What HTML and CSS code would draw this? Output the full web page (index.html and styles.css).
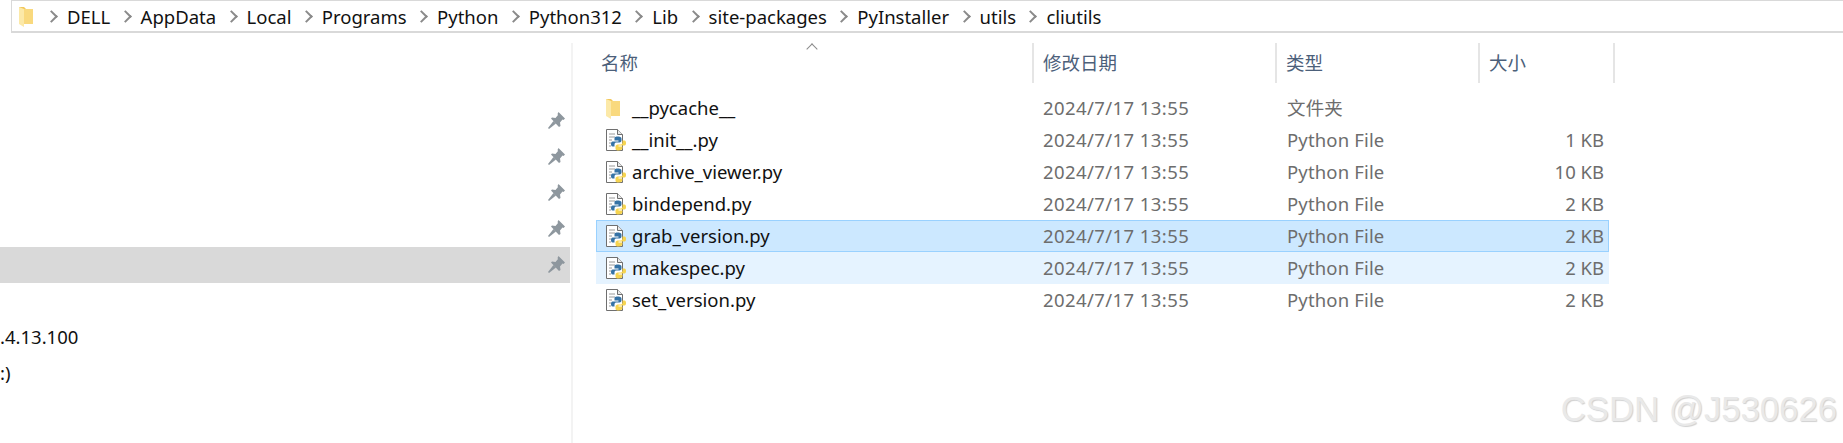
FILE: index.html
```html
<!DOCTYPE html>
<html lang="zh-CN">

<head>
    <meta charset="UTF-8">
    <title>cliutils</title>
    <link rel="stylesheet" href="styles.css">
</head>

<body>
    <svg class="defs" width="0" height="0">
        <symbol id="folder" viewBox="0 0 14 21">
            <path d="M0 1h5l2 2h7v15H0z" fill="#f2c75c" />
            <path d="M4 3h10v15H4z" fill="#f9d97e" />
            <path d="M0 1l5 2v18l-5-3z" fill="#fce9a8" />
        </symbol>
        <symbol id="pyfile" viewBox="0 0 20 22">
            <path d="M.5.5h11l5 5v16H.5z" fill="#fff" stroke="#6f6f6f" />
            <path d="M11.5.5v5h5" fill="#e8e8e8" stroke="#6f6f6f" />
            <path d="M3 5h6M3 8h6M3 11h3M3 14h2M3 17h2" stroke="#9a9a9a" />
            <g transform="translate(1.500 .500)">
                <path d="M10 7c-3 0-3 1-3 3v1h4v1H5c-2 0-2 5 0 5h2v-2c0-1.500 1-2 2-2h3c1 0 2-1 2-2v-2c0-1.500-2-2-4-2z" fill="#3572a5" />
                <path d="M11 21c3 0 4-1 4-3v-1h-4v-1h6c2 0 2-5 0-5h-2v2c0 1.500-1 2-2 2h-3c-1 0-2 1-2 2v2c0 1.500 1 2 3 2z" fill="#f6d44f" />
            </g>
        </symbol>
        <symbol id="pin" viewBox="0 0 17 17">
            <path d="M10.500 0L17 6.500 15.500 8l-1-.5L12 10.500 12.500 14 11 15 3 6.500 4 5.500l3.500.5L10 3l-.5-1z" fill="#8e979e" />
            <path d="M5.500 9L8 11.500 1 17 0 16z" fill="#8e979e" />
        </symbol>
    </svg>

    <div class="addr">
        <svg class="addr-folder"><use href="#folder" /></svg>
        <span class="crumb">DELL</span>
        <span class="crumb">AppData</span>
        <span class="crumb">Local</span>
        <span class="crumb">Programs</span>
        <span class="crumb">Python</span>
        <span class="crumb">Python312</span>
        <span class="crumb">Lib</span>
        <span class="crumb">site-packages</span>
        <span class="crumb">PyInstaller</span>
        <span class="crumb">utils</span>
        <span class="crumb">cliutils</span>
    </div>

    <div class="wrap">
        <!--左边导航-->
        <div class="side">
            <div class="nav"><svg class="pin"><use href="#pin" /></svg></div>
            <div class="nav"><svg class="pin"><use href="#pin" /></svg></div>
            <div class="nav"><svg class="pin"><use href="#pin" /></svg></div>
            <div class="nav"><svg class="pin"><use href="#pin" /></svg></div>
            <div class="nav current"><svg class="pin"><use href="#pin" /></svg></div>
            <div class="nav"></div>
            <div class="nav">.4.13.100</div>
            <div class="nav">:)</div>
        </div>
        <!--文件列表-->
        <div class="list">
            <div class="head">
                <span class="sort"></span>
                <div class="th">名称</div>
                <div class="th">修改日期</div>
                <div class="th">类型</div>
                <div class="th">大小</div>
            </div>
            <div class="row">
                <div class="name"><svg class="ico-folder"><use href="#folder" /></svg>__pycache__</div>
                <div class="date">2024/7/17 13:55</div>
                <div class="type">文件夹</div>
                <div class="size"></div>
            </div>
            <div class="row">
                <div class="name"><svg class="ico-py"><use href="#pyfile" /></svg>__init__.py</div>
                <div class="date">2024/7/17 13:55</div>
                <div class="type">Python File</div>
                <div class="size">1 KB</div>
            </div>
            <div class="row">
                <div class="name"><svg class="ico-py"><use href="#pyfile" /></svg>archive_viewer.py</div>
                <div class="date">2024/7/17 13:55</div>
                <div class="type">Python File</div>
                <div class="size">10 KB</div>
            </div>
            <div class="row">
                <div class="name"><svg class="ico-py"><use href="#pyfile" /></svg>bindepend.py</div>
                <div class="date">2024/7/17 13:55</div>
                <div class="type">Python File</div>
                <div class="size">2 KB</div>
            </div>
            <div class="row selected">
                <div class="name"><svg class="ico-py"><use href="#pyfile" /></svg>grab_version.py</div>
                <div class="date">2024/7/17 13:55</div>
                <div class="type">Python File</div>
                <div class="size">2 KB</div>
            </div>
            <div class="row hover">
                <div class="name"><svg class="ico-py"><use href="#pyfile" /></svg>makespec.py</div>
                <div class="date">2024/7/17 13:55</div>
                <div class="type">Python File</div>
                <div class="size">2 KB</div>
            </div>
            <div class="row">
                <div class="name"><svg class="ico-py"><use href="#pyfile" /></svg>set_version.py</div>
                <div class="date">2024/7/17 13:55</div>
                <div class="type">Python File</div>
                <div class="size">2 KB</div>
            </div>
        </div>
    </div>

    <div class="mark">CSDN @J530626</div>
</body>

</html>
```
FILE: styles.css
```css
* {
    margin: 0;
    padding: 0;
    box-sizing: border-box;
}

html,
body {
    height: 443px;
    overflow: hidden;
}

body {
    position: relative;
    background-color: #fff;
    color: #111;
    font-family: "Noto Sans", "Noto Sans CJK SC", sans-serif;
    font-size: 18.500px;
}

.defs {
    position: absolute;
}

.addr {
    display: flex;
    align-items: center;
    height: 33px;
    margin-left: 11px;
    padding-left: 7px;
    border: 1px solid #d9d9d9;
    border-width: 1px 0 2px 1px;
}

.addr-folder {
    width: 14px;
    height: 21px;
    margin-right: 14px;
}

.crumb {
    display: flex;
    align-items: center;
}

.crumb::before {
    content: "";
    width: 7px;
    height: 7px;
    margin-right: 11px;
    border: solid #8a8a8a;
    border-width: 2px 2px 0 0;
    transform: rotate(45deg);
}

.crumb + .crumb {
    margin-left: 10.400px;
}

.wrap {
    display: flex;
    margin-top: 10px;
}

.side {
    width: 573px;
    height: 400px;
    padding-top: 60px;
    border-right: 2px solid #f3f3f3;
}

.nav {
    display: flex;
    align-items: center;
    justify-content: flex-end;
    height: 36px;
    padding-right: 6px;
}

.nav:nth-child(n+7) {
    justify-content: flex-start;
    padding-bottom: 2px;
}

.current {
    margin-right: 1px;
    padding-right: 5px;
    background-color: #d9d9d9;
}

.pin {
    width: 17px;
    height: 17px;
    margin-bottom: 2px;
}

.list {
    width: 1041px;
    padding-left: 23px;
}

.head {
    position: relative;
    display: grid;
    grid-template-columns: 438px 243px 203px 135px;
    height: 40px;
    margin-bottom: 9px;
}

.th {
    display: flex;
    align-items: center;
    padding: 0 0 2px 9px;
    border-right: 2px solid #e5e5e5;
    color: #4c607a;
}

.th:nth-of-type(1) {
    padding-left: 5px;
}

.sort {
    position: absolute;
    top: 2px;
    left: 212px;
    width: 8px;
    height: 8px;
    border: solid #8a8a8a;
    border-width: 1px 0 0 1px;
    transform: rotate(45deg);
}

.row {
    display: grid;
    grid-template-columns: 438px 243px 203px 129px;
    align-items: center;
    width: 1013px;
    height: 32px;
    color: #6d6d6d;
}

.selected {
    background-color: #cce8ff;
    box-shadow: inset 0 0 0 1px #99d1ff;
}

.hover {
    background-color: #e5f3ff;
}

.name {
    display: flex;
    align-items: center;
    padding: 0 0 2px 10px;
    color: #111;
}

.ico-folder {
    width: 14px;
    height: 21px;
    margin: 2px 12px 0 0;
}

.ico-py {
    width: 20px;
    height: 22px;
    margin: 2px 6px 0 0;
}

.date {
    padding: 0 0 2px 9px;
    letter-spacing: .420px;
}

.type {
    padding: 0 0 2px 10px;
    letter-spacing: .150px;
}

.size {
    padding: 0 5px 2px 0;
    text-align: right;
}

.mark {
    position: absolute;
    right: 6px;
    bottom: 16px;
    color: #e9e9e9;
    font-family: "Liberation Sans", sans-serif;
    font-size: 34.700px;
    line-height: 36px;
    text-shadow: 1px 1px 1px #d0d0d0;
}
```
